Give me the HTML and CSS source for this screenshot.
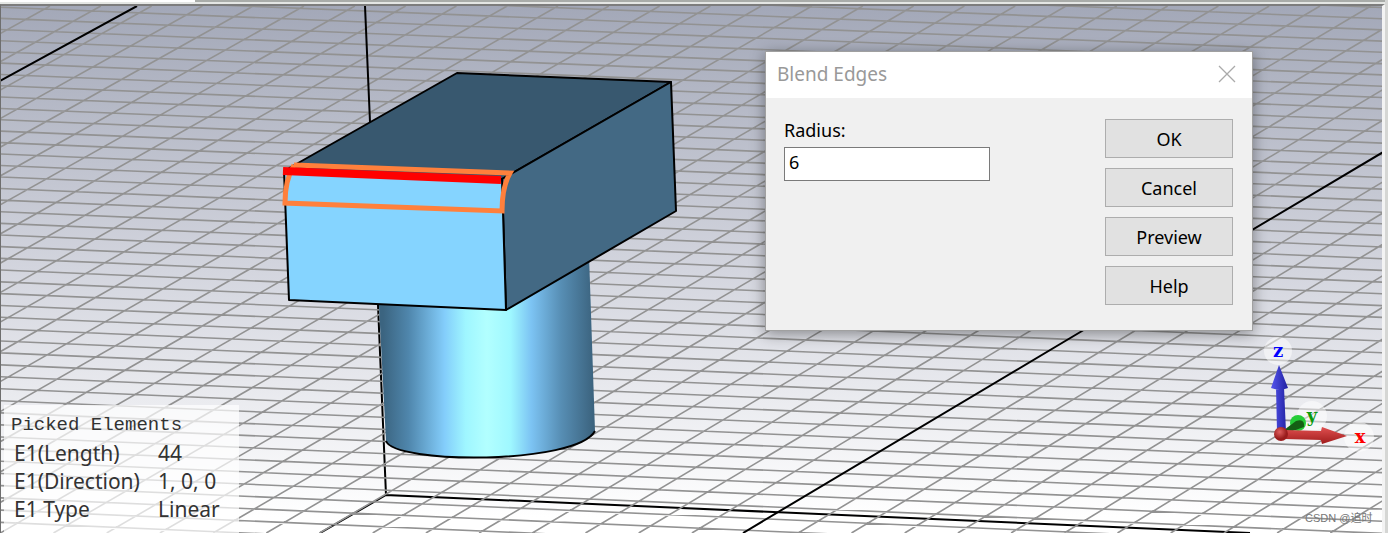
FILE: index.html
```html
<!DOCTYPE html>
<html lang="en">
<head>
<meta charset="utf-8">
<title>Blend Edges</title>
<link rel="stylesheet" href="styles.css">
</head>
<body>
<div class="app">
  <div class="tabstrip"><span class="tab"></span></div>
  <main class="viewport">
    <svg class="scene" viewBox="1 6 1381 527" preserveAspectRatio="xMidYMid slice" role="img" aria-label="3D model view">
      <defs>
        <linearGradient id="cyl" gradientUnits="userSpaceOnUse" x1="383" y1="0" x2="595" y2="0">
          <stop offset="0" stop-color="#3b6480"/>
          <stop offset=".12" stop-color="#4f86ac"/>
          <stop offset=".29" stop-color="#83cdfb"/>
          <stop offset=".39" stop-color="#9ff6ff"/>
          <stop offset=".49" stop-color="#b2ffff"/>
          <stop offset=".6" stop-color="#9ff8ff"/>
          <stop offset=".7" stop-color="#7cc3f3"/>
          <stop offset=".84" stop-color="#578eb4"/>
          <stop offset="1" stop-color="#3a617c"/>
        </linearGradient>
        <linearGradient id="zshaft"><stop offset="0" stop-color="#5555ee"/><stop offset="1" stop-color="#2020a0"/></linearGradient>
        <linearGradient id="xshaft" x2="0" y2="1"><stop offset="0" stop-color="#e05050"/><stop offset="1" stop-color="#a01c1c"/></linearGradient>
        <radialGradient id="ball" cx=".4" cy=".35"><stop offset="0" stop-color="#e06060"/><stop offset="1" stop-color="#9a1c1c"/></radialGradient>
      </defs>
      <path class="frame" d="M378 305 386 495 1250 533M386 495 320 533"/>
      <g class="grid" id="grid"></g>
      <path class="frame" d="M137 6 0 81M365 6 370 122M1629 6 1082 331 743 533"/>
      <path fill="url(#cyl)" d="M379 290V306L386 441C394 464 576 465 595 431L589 255Z"/>
      <path class="edge" d="M386 441C394 464 576 465 595 431"/>
      <g class="edge">
        <path fill="#38586f" d="M457 73 671 82 502 179 284 171Z"/>
        <path fill="#436984" d="M671 82 676 211 506 310 502 179Z"/>
        <path fill="#85d4ff" d="M284 171 502 179 506 310 289 300Z"/>
      </g>
      <path class="blend" d="M294 165 510 173Q502 187 502 211L285 203Q285 180 294 165"/>
      <path class="picked" d="M283 171 501 180"/>
      <g class="triad">
        <circle class="halo" cx="1278" cy="351" r="14"/>
        <circle class="halo" cx="1312" cy="416" r="15"/>
        <circle class="halo" cx="1359" cy="437" r="15"/>
        <circle cx="1298" cy="423" r="8" fill="#25cc38"/>
        <path fill="#145f14" d="M1284 430 1296 421Q1305 418 1304 427L1290 432Z"/>
        <path fill="url(#zshaft)" d="M1276 387H1284L1286 432H1277ZM1279 365 1288 388Q1280 391 1271 388Z"/>
        <path fill="url(#xshaft)" d="M1284 430 1322 431V440L1284 439ZM1322 427 1347 436 1322 444Q1319 436 1322 427Z"/>
        <circle cx="1281" cy="434" r="7" fill="url(#ball)"/>
        <text class="axis axis-z" x="1278" y="357">z</text>
        <text class="axis axis-y" x="1312" y="422">y</text>
        <text class="axis axis-x" x="1360" y="443">x</text>
      </g>
      <text class="watermark" x="1305" y="522">CSDN @追时</text>
    </svg>

    <section class="picked-info">
      <h2 class="info-title">Picked Elements</h2>
      <dl class="info-list">
        <dt>E1(Length)</dt><dd>44</dd>
        <dt>E1(Direction)</dt><dd>1, 0, 0</dd>
        <dt>E1 Type</dt><dd>Linear</dd>
      </dl>
    </section>

    <form class="dialog" role="dialog" aria-labelledby="dialog-title">
      <header class="titlebar">
        <h1 class="title" id="dialog-title">Blend Edges</h1>
        <button class="close" type="button" aria-label="Close">
          <svg width="18" height="18" viewBox="0 0 18 18"><path d="M1 1 17 17M17 1 1 17"/></svg>
        </button>
      </header>
      <div class="dialog-body">
        <div class="field">
          <label for="radius">Radius:</label>
          <input id="radius" type="text" value="6">
        </div>
        <div class="actions">
          <button type="button">OK</button>
          <button type="button">Cancel</button>
          <button type="button">Preview</button>
          <button type="button">Help</button>
        </div>
      </div>
    </form>
  </main>
</div>
<script src="grid.js"></script>
</body>
</html>
```
FILE: styles.css
```css
* { box-sizing: border-box; }

body {
  margin: 0;
  font-family: "Noto Sans", "Noto Sans CJK SC", sans-serif;
  background: #d5d6d4;
}

.app {
  display: flex;
  flex-direction: column;
  height: 100vh;
  padding-right: 3px;
}

.tabstrip {
  height: 4px;
  background: #a9aca9;
  border-bottom: 2px solid #e4e6e4;
}

.tab {
  display: block;
  width: 195px;
  height: 2px;
  background: #fff;
}

.viewport {
  position: relative;
  flex: 1;
  min-height: 0;
  overflow: hidden;
  border-top: 2px solid #7d7d7d;
  border-left: 1px solid #6e6e6e;
  border-right: 3px solid #f3f3f3;
  background: linear-gradient(#a3a8b8, #d3d5de 50%, #fff 97%);
}

.scene {
  display: block;
  width: 100%;
  height: 100%;
}

.grid { stroke: #929292; stroke-width: 1.6; fill: none; }
.frame { stroke: #000; stroke-width: 2; fill: none; }
.edge { stroke: #000; stroke-width: 2; stroke-linejoin: round; }
path.edge { fill: none; }
.blend { stroke: #ff803c; stroke-width: 5; fill: none; }
.picked { stroke: #f00; stroke-width: 8; }
.halo { fill: #fff; opacity: .5; }

.axis {
  font: bold 18px "DejaVu Serif", serif;
  text-anchor: middle;
}
.axis-x { fill: #f00; }
.axis-y { fill: #0a9a0a; }
.axis-z { fill: #00f; }

.watermark {
  font: 11px "Liberation Sans", "Noto Sans CJK SC", sans-serif;
  fill: #777;
}

.picked-info {
  position: absolute;
  left: 3px;
  bottom: 0;
  width: 235px;
  padding: 6px 4px 10px 7px;
  color: #333;
  background: rgba(255, 255, 255, .7);
}

.info-title {
  margin: 0;
  font: 19px/28px "Liberation Mono", monospace;
}

.info-list {
  display: grid;
  grid-template-columns: 144px 1fr;
  margin: 0;
  padding-left: 3px;
  font-size: 21px;
  line-height: 28px;
}
.info-list dd { margin: 0; }

.dialog {
  position: absolute;
  top: 45px;
  right: 129px;
  width: 488px;
  border: 1px solid #a0a0a0;
  background: #f0f0f0;
  box-shadow: 0 3px 14px rgba(0, 0, 0, .4);
}

.titlebar {
  display: flex;
  align-items: center;
  justify-content: space-between;
  height: 46px;
  padding: 0 16px 2px 11px;
  background: #fff;
}

.title {
  margin: 0;
  font-size: 19px;
  font-weight: 400;
  color: #999;
}

.close {
  display: flex;
  padding: 0;
  border: 0;
  background: none;
}
.close svg { fill: none; stroke: #aaa; stroke-width: 1.3; }

.dialog-body {
  display: flex;
  justify-content: space-between;
  padding: 21px 19px 25px 18px;
  font-size: 18px;
}

.field {
  display: flex;
  flex-direction: column;
  gap: 6px;
  width: 206px;
  line-height: 22px;
}

.field input {
  height: 34px;
  padding: 0 4px 4px;
  border: 1px solid #7a7a7a;
  font: inherit;
  background: #fff;
}

.actions {
  display: flex;
  flex-direction: column;
  gap: 10px;
  width: 128px;
}

.actions button {
  height: 39px;
  padding: 0;
  border: 1px solid #adadad;
  font: inherit;
  color: #000;
  background: #e1e1e1;
}
```
FILE: grid.js
```js
const grid = document.getElementById('grid');
let d = '';
// Rows of the working plane, from the left edge to the right edge.
for (let n = -6; n < 46; n++) {
  const left = 18.3 + 11.15 * n + 0.0133 * n * n;
  const right = 75 + 11.3 * n + 0.0117 * n * n;
  d += `M0 ${left.toFixed(1)}L1384 ${right.toFixed(1)}`;
}
// Columns, from the top edge to the bottom edge; the frame line replaces one.
for (let k = 0; k < 44; k++) {
  if (k === 31) continue;
  const top = 50 + 50.8 * k;
  const bottom = -904.1 + 53.2 * k;
  d += `M${top.toFixed(1)} 6L${bottom.toFixed(1)} 533`;
}
const path = document.createElementNS('http://www.w3.org/2000/svg', 'path');
path.setAttribute('d', d);
grid.appendChild(path);
```
